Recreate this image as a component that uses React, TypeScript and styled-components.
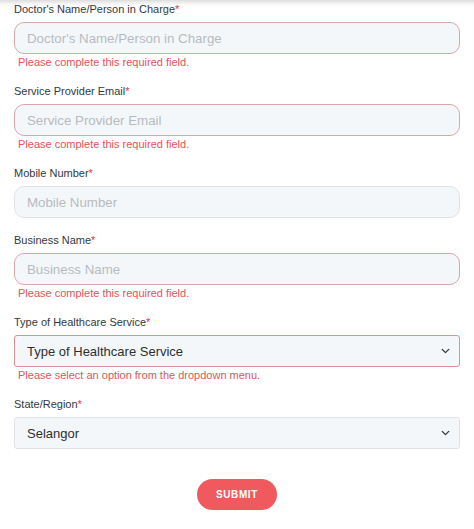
import styled, { createGlobalStyle } from 'styled-components';
import { ChevronDown } from 'lucide-react';

const GlobalStyle = createGlobalStyle`
  html, body {
    margin: 0;
    padding: 0;
    background: #ffffff;
  }
  * {
    box-sizing: border-box;
  }
`;

type Field = {
  label: string;
  placeholder: string;
  error?: string;
};

const textFields: Field[] = [
  {
    label: "Doctor's Name/Person in Charge",
    placeholder: "Doctor's Name/Person in Charge",
    error: 'Please complete this required field.',
  },
  {
    label: 'Service Provider Email',
    placeholder: 'Service Provider Email',
    error: 'Please complete this required field.',
  },
  { label: 'Mobile Number', placeholder: 'Mobile Number' },
  {
    label: 'Business Name',
    placeholder: 'Business Name',
    error: 'Please complete this required field.',
  },
];

const App = (): JSX.Element => {
  return (
    <Page>
      <GlobalStyle />
      <Form onSubmit={(e) => e.preventDefault()}>
        {textFields.map((f) => (
          <Group key={f.label}>
            <Label>
              {f.label}
              <Star>*</Star>
            </Label>
            <TextInput placeholder={f.placeholder} $invalid={!!f.error} />
            {f.error && <ErrorText>{f.error}</ErrorText>}
          </Group>
        ))}
        <Group>
          <Label>
            Type of Healthcare Service<Star>*</Star>
          </Label>
          <SelectWrap>
            <Select $invalid defaultValue="">
              <option value="">Type of Healthcare Service</option>
              <option value="clinic">Clinic</option>
              <option value="hospital">Hospital</option>
            </Select>
            <Chevron size={13} strokeWidth={2.6} />
          </SelectWrap>
          <ErrorText>Please select an option from the dropdown menu.</ErrorText>
        </Group>
        <Group>
          <Label>
            State/Region<Star>*</Star>
          </Label>
          <SelectWrap>
            <Select defaultValue="Selangor">
              <option>Selangor</option>
              <option>Johor</option>
              <option>Penang</option>
            </Select>
            <Chevron size={13} strokeWidth={2.6} />
          </SelectWrap>
        </Group>
        <SubmitRow>
          <SubmitButton type="submit">SUBMIT</SubmitButton>
        </SubmitRow>
      </Form>
    </Page>
  );
};

const Page = styled.div`
  min-height: 529px;
  background: #ffffff;
  box-shadow: inset 0 7px 6px -6px rgba(0, 0, 0, 0.22);
  font-family: 'Liberation Sans', Arial, sans-serif;
`;

const Form = styled.form`
  display: flex;
  flex-direction: column;
  padding: 2px 14px 0;
`;

const Group = styled.div`
  display: flex;
  flex-direction: column;
  margin-bottom: 15px;
`;

const Label = styled.label`
  font-size: 11px;
  line-height: 14px;
  color: #33383d;
  margin-bottom: 6px;
`;

const Star = styled.span`
  color: #e0323c;
`;

const TextInput = styled.input<{ $invalid?: boolean }>`
  width: 100%;
  height: 32px;
  padding: 0 12px;
  border: 1px solid ${(p) => (p.$invalid ? '#d9a6a9' : '#dfe3e8')};
  border-radius: 10px;
  background: #f4f7fa;
  font-family: inherit;
  font-size: 13.3px;
  color: #33383d;
  outline: none;

  &::placeholder {
    color: #b7bbc0;
  }
`;

const SelectWrap = styled.div`
  position: relative;
`;

const Select = styled.select<{ $invalid?: boolean }>`
  width: 100%;
  height: 32px;
  padding: 0 30px 0 12px;
  border: 1px solid ${(p) => (p.$invalid ? '#df8e92' : '#dfe3e8')};
  border-radius: 3px;
  background: #f4f7fa;
  font-family: inherit;
  font-size: 13px;
  color: #2b2f33;
  appearance: none;
  -webkit-appearance: none;
  outline: none;
`;

const Chevron = styled(ChevronDown)`
  position: absolute;
  right: 8px;
  top: 50%;
  transform: translateY(-50%);
  color: #3a3f44;
  pointer-events: none;
`;

const ErrorText = styled.div`
  font-size: 11px;
  line-height: 14px;
  margin-top: 1px;
  padding-left: 4px;
  color: #e5525a;
`;

const SubmitRow = styled.div`
  display: flex;
  justify-content: center;
  margin-top: 15px;
`;

const SubmitButton = styled.button`
  width: 80px;
  height: 31px;
  border: none;
  border-radius: 16px;
  background: #f05a5f;
  color: #ffffff;
  font-family: inherit;
  font-size: 10px;
  font-weight: 700;
  letter-spacing: 0.6px;
  cursor: pointer;
`;

export default App;
